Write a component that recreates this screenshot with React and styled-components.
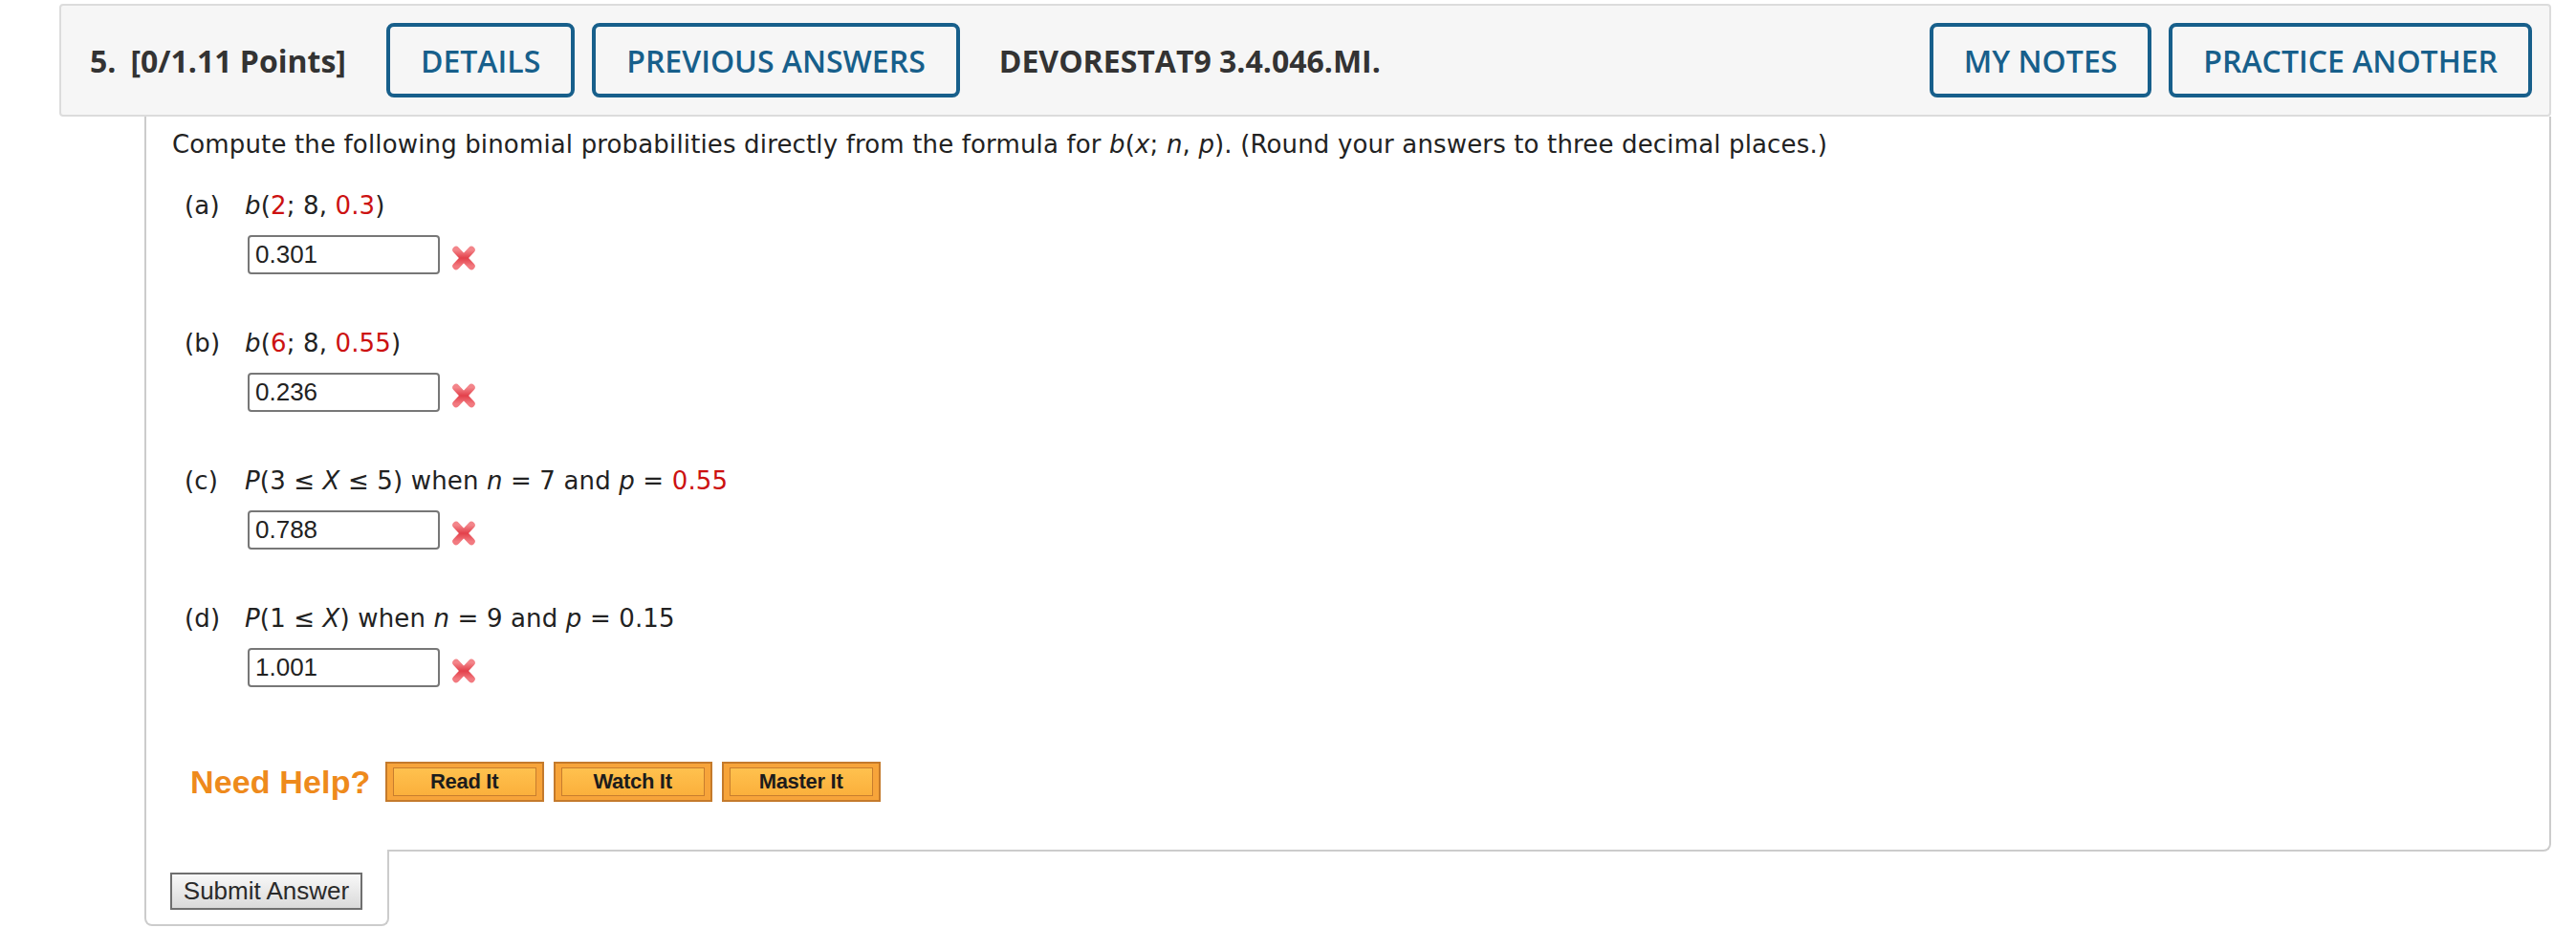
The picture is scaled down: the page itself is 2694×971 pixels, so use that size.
import React from "react";
import styled, { createGlobalStyle } from "styled-components";

const Global = createGlobalStyle`
  html, body { margin: 0; padding: 0; background: #ffffff; }
  body { font-family: "DejaVu Sans", Verdana, sans-serif; }
`;

const Page = styled.div`
  padding: 4px 26px 0 62px;
`;

const Header = styled.header`
  display: flex;
  align-items: center;
  height: 118px;
  box-sizing: border-box;
  padding: 0 18px 0 30px;
  background: #f6f6f6;
  border: 2px solid #dcdcdc;
  border-radius: 4px;
  font-family: "Open Sans", sans-serif;
`;

const Title = styled.div`
  font-size: 32px;
  font-weight: 700;
  color: #333333;
  margin-right: ${(p) => p.$gap || 0}px;
  white-space: nowrap;
  span + span { margin-left: 15px; }
`;

const NavButton = styled.button`
  height: 78px;
  box-sizing: border-box;
  padding: 0 32px;
  margin-right: ${(p) => p.$gap || 0}px;
  border: 4px solid #175f8b;
  border-radius: 8px;
  background: transparent;
  color: #175f8b;
  font-family: "Open Sans", sans-serif;
  font-size: 32px;
  font-weight: 600;
  white-space: nowrap;
  cursor: pointer;
`;

const Spacer = styled.div`
  flex: 1;
`;

const Body = styled.div`
  margin-left: 89px;
`;

const Panel = styled.section`
  border: 2px solid #cccccc;
  border-top: none;
  border-radius: 0 0 8px 0;
  padding: 11px 0 50px 27px;
  color: #222222;
  font-size: 26px;
  letter-spacing: 0.15px;
`;

const Line = styled.div`
  line-height: 36px;
  white-space: nowrap;
`;

const Red = styled.span`
  color: #cc1111;
`;

const Parts = styled.div`
  margin-top: 28px;
  display: flex;
  flex-direction: column;
  gap: 54px;
`;

const Part = styled.div`
  display: grid;
  grid-template-columns: 63px 1fr;
  row-gap: 13px;
  margin-left: 13px;
`;

const Tag = styled.div`
  line-height: 36px;
`;

const AnswerRow = styled.div`
  grid-column: 2;
  display: flex;
  align-items: center;
  margin-left: 3px;
`;

const Input = styled.input`
  width: 201px;
  height: 41px;
  box-sizing: border-box;
  border: 2px solid #777777;
  border-radius: 4px;
  padding: 0 6px;
  font-family: "Liberation Sans", Arial, sans-serif;
  font-size: 26px;
  color: #222222;
  background: #ffffff;
`;

const WrongIcon = styled.svg`
  margin-left: 11px;
  margin-top: 6px;
  width: 28px;
  height: 26px;
`;

const HelpRow = styled.div`
  display: flex;
  align-items: center;
  margin-top: 78px;
  margin-left: 19px;
`;

const HelpLabel = styled.div`
  font-family: "Liberation Sans", Arial, sans-serif;
  font-weight: 700;
  font-size: 34px;
  color: #ee8a1c;
  margin-right: 15px;
`;

const HelpButton = styled.button`
  width: 166px;
  height: 42px;
  box-sizing: border-box;
  margin-right: 10px;
  padding: 4px 6px;
  border: 2px solid #c47a2c;
  background: #f7a43a;
  cursor: pointer;
  display: flex;
`;

const HelpInner = styled.span`
  flex: 1;
  display: flex;
  align-items: center;
  justify-content: center;
  border: 1px solid #c87d2e;
  background: linear-gradient(#ffc14e, #fbb03c);
  font-family: "Liberation Sans", Arial, sans-serif;
  font-weight: 700;
  font-size: 22px;
  letter-spacing: -0.3px;
  color: #1c1c1c;
`;

const SubmitArea = styled.div`
  position: relative;
  width: 256px;
  height: 80px;
  box-sizing: border-box;
  margin-top: -2px;
  padding: 24px 0 0 25px;
  background: #ffffff;
  border: 2px solid #cccccc;
  border-top: none;
  border-radius: 0 0 8px 8px;
`;

const SubmitButton = styled.button`
  width: 201px;
  height: 39px;
  box-sizing: border-box;
  padding: 0;
  border: 2px solid #6f6f6f;
  background: linear-gradient(#f8f8f8, #dadada);
  font-family: "Liberation Sans", Arial, sans-serif;
  font-size: 26px;
  color: #2a2a2a;
  cursor: pointer;
`;

const Wrong = () => (
  <WrongIcon viewBox="0 0 28 26">
    <defs>
      <linearGradient id="wg" x1="0" y1="0" x2="0" y2="1">
        <stop offset="0" stopColor="#f3858a" />
        <stop offset="0.5" stopColor="#e3404a" />
        <stop offset="1" stopColor="#f27a80" />
      </linearGradient>
    </defs>
    <g stroke="url(#wg)" strokeWidth="7.5" strokeLinecap="round">
      <line x1="6" y1="4.5" x2="22" y2="21.5" />
      <line x1="22" y1="4.5" x2="6" y2="21.5" />
    </g>
  </WrongIcon>
);

const I = styled.i`
  font-style: italic;
`;

const parts = [
  {
    tag: "(a)",
    expr: (
      <>
        <I>b</I>(<Red>2</Red>; 8, <Red>0.3</Red>)
      </>
    ),
    value: "0.301",
  },
  {
    tag: "(b)",
    expr: (
      <>
        <I>b</I>(<Red>6</Red>; 8, <Red>0.55</Red>)
      </>
    ),
    value: "0.236",
  },
  {
    tag: "(c)",
    expr: (
      <>
        <I>P</I>(3 ≤ <I>X</I> ≤ 5) when <I>n</I> = 7 and <I>p</I> ={" "}
        <Red>0.55</Red>
      </>
    ),
    value: "0.788",
  },
  {
    tag: "(d)",
    expr: (
      <>
        <I>P</I>(1 ≤ <I>X</I>) when <I>n</I> = 9 and <I>p</I> = 0.15
      </>
    ),
    value: "1.001",
  },
];

export default function App() {
  return (
    <Page>
      <Global />
      <Header>
        <Title $gap={42}>
          <span>5.</span>
          <span>[0/1.11 Points]</span>
        </Title>
        <NavButton $gap={18}>DETAILS</NavButton>
        <NavButton $gap={41}>PREVIOUS ANSWERS</NavButton>
        <Title>DEVORESTAT9 3.4.046.MI.</Title>
        <Spacer />
        <NavButton $gap={18}>MY NOTES</NavButton>
        <NavButton>PRACTICE ANOTHER</NavButton>
      </Header>
      <Body>
        <Panel>
          <Line>
            Compute the following binomial probabilities directly from the
            formula for <I>b</I>(<I>x</I>; <I>n</I>, <I>p</I>). (Round your
            answers to three decimal places.)
          </Line>
          <Parts>
            {parts.map((p) => (
              <Part key={p.tag}>
                <Tag>{p.tag}</Tag>
                <Line>{p.expr}</Line>
                <AnswerRow>
                  <Input defaultValue={p.value} />
                  <Wrong />
                </AnswerRow>
              </Part>
            ))}
          </Parts>
          <HelpRow>
            <HelpLabel>Need Help?</HelpLabel>
            <HelpButton>
              <HelpInner>Read It</HelpInner>
            </HelpButton>
            <HelpButton>
              <HelpInner>Watch It</HelpInner>
            </HelpButton>
            <HelpButton>
              <HelpInner>Master It</HelpInner>
            </HelpButton>
          </HelpRow>
        </Panel>
        <SubmitArea>
          <SubmitButton>Submit Answer</SubmitButton>
        </SubmitArea>
      </Body>
    </Page>
  );
}
